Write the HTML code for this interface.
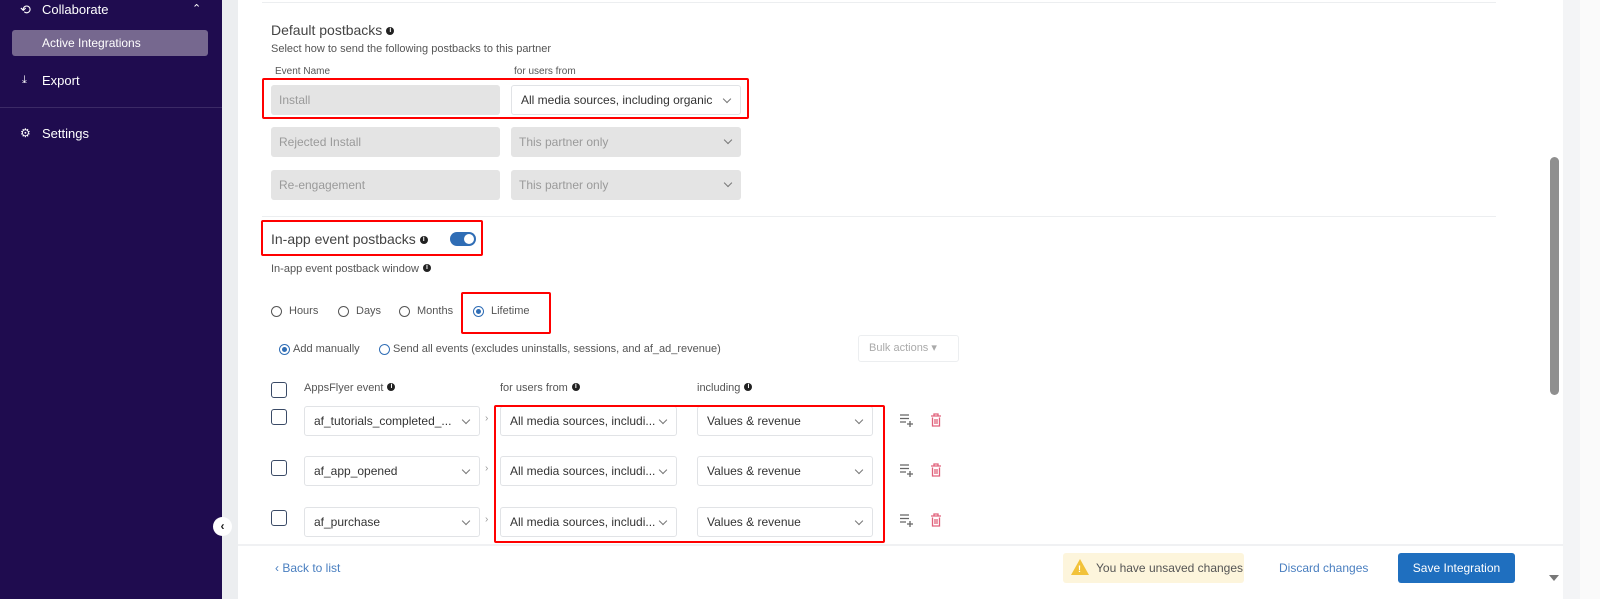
<!DOCTYPE html>
<html><head><meta charset="utf-8"><style>
*{box-sizing:border-box;margin:0;padding:0}
body{width:1600px;height:599px;overflow:hidden;font-family:"Liberation Sans",sans-serif;background:#fff;position:relative;color:#333}
.a{position:absolute}
.sb{left:0;top:0;width:222px;height:599px;background:#1f0c4f}
.sbt{color:#fff;font-size:13px}
.gap{left:222px;top:0;width:16px;height:599px;background:#eceef0}
.in{background:#e4e4e4;border-radius:3px;color:#9a9a9a;font-size:12px;padding-left:8px;line-height:30px;height:30px}
.sel{border:1px solid #e1e3e6;border-radius:3px;background:#fff;font-size:12px;color:#333;padding-left:9px;line-height:28px;height:30px}
.chev{position:absolute;right:10px;top:10px;width:6px;height:6px;border-right:1px solid #777;border-bottom:1px solid #777;transform:rotate(45deg)}
.red{border:2px solid #f00;border-radius:2px}
.cb{width:16px;height:16px;border:1.5px solid #3a4a66;border-radius:3px;background:#fff}
.rad{width:11px;height:11px;border:1px solid #555;border-radius:50%}
.lbl{font-size:11px;color:#555}
.info{display:inline-block;width:8px;height:8px;border-radius:50%;background:#222;color:#fff;font-size:7px;line-height:8px;text-align:center;font-weight:bold;vertical-align:3px;margin-left:4px}
.hr{height:1px;background:#eceef0}
</style></head><body>
<div class="a sb"></div>
<div class="a sbt" style="left:20px;top:2px">⟲</div>
<div class="a sbt" style="left:42px;top:2px">Collaborate</div>
<div class="a sbt" style="left:192px;top:2px;font-size:11px">⌃</div>
<div class="a" style="left:12px;top:30px;width:196px;height:26px;background:#76688f;border-radius:3px"></div>
<div class="a sbt" style="left:42px;top:36px;font-size:12px">Active Integrations</div>
<div class="a sbt" style="left:22px;top:74px;font-size:11px">⤓</div>
<div class="a sbt" style="left:42px;top:73px">Export</div>
<div class="a" style="left:0;top:107px;width:222px;height:1px;background:#3b2a66"></div>
<div class="a sbt" style="left:20px;top:126px;font-size:12px">⚙</div>
<div class="a sbt" style="left:42px;top:126px">Settings</div>
<div class="a gap"></div>
<div class="a" style="left:213px;top:517px;width:19px;height:19px;border-radius:50%;background:#fff;font-size:12px;text-align:center;line-height:19px;font-weight:bold;color:#222">‹</div>
<div class="a" style="left:1563px;top:0;width:17px;height:599px;background:#f3f4f6"></div>
<div class="a" style="left:1580px;top:0;width:20px;height:599px;background:#fafafa"></div>
<div class="a" style="left:1550px;top:157px;width:9px;height:238px;background:#8f8f8f;border-radius:5px"></div>
<div class="a" style="left:1549px;top:575px;width:0;height:0;border-left:5px solid transparent;border-right:5px solid transparent;border-top:6px solid #777"></div>

<div class="a hr" style="left:262px;top:2px;width:1234px"></div>
<div class="a" style="left:271px;top:22px;font-size:14px;color:#444">Default postbacks<span class="info">i</span></div>
<div class="a lbl" style="left:271px;top:43px">Select how to send the following postbacks to this partner</div>
<div class="a lbl" style="left:275px;top:66px;font-size:10px">Event Name</div>
<div class="a lbl" style="left:514px;top:66px;font-size:10px">for users from</div>
<div class="a in" style="left:271px;top:85px;width:229px">Install</div>
<div class="a sel" style="left:511px;top:85px;width:230px">All media sources, including organic<span class="chev"></span></div>
<div class="a red" style="left:262px;top:78px;width:487px;height:41px"></div>
<div class="a in" style="left:271px;top:127px;width:229px">Rejected Install</div>
<div class="a in" style="left:511px;top:127px;width:230px">This partner only<span class="chev"></span></div>
<div class="a in" style="left:271px;top:170px;width:229px">Re-engagement</div>
<div class="a in" style="left:511px;top:170px;width:230px">This partner only<span class="chev"></span></div>
<div class="a hr" style="left:262px;top:216px;width:1234px"></div>

<div class="a red" style="left:261px;top:220px;width:222px;height:36px"></div>
<div class="a" style="left:271px;top:231px;font-size:14px;color:#444">In-app event postbacks<span class="info">i</span></div>
<div class="a" style="left:450px;top:232px;width:26px;height:14px;border-radius:7px;background:#2f6db5"></div>
<div class="a" style="left:464px;top:234px;width:10px;height:10px;border-radius:50%;background:#fff"></div>
<div class="a lbl" style="left:271px;top:263px">In-app event postback window<span class="info">i</span></div>
<div class="a rad" style="left:271px;top:306px"></div><div class="a lbl" style="left:289px;top:305px">Hours</div>
<div class="a rad" style="left:338px;top:306px"></div><div class="a lbl" style="left:356px;top:305px">Days</div>
<div class="a rad" style="left:399px;top:306px"></div><div class="a lbl" style="left:417px;top:305px">Months</div>
<div class="a red" style="left:461px;top:292px;width:90px;height:42px"></div>
<div class="a rad" style="left:473px;top:306px;border-color:#2f6db5"></div><div class="a" style="left:476px;top:309px;width:5px;height:5px;border-radius:50%;background:#2f6db5"></div>
<div class="a lbl" style="left:491px;top:305px">Lifetime</div>

<div class="a rad" style="left:279px;top:344px;border:1.5px solid #2f6db5"></div><div class="a" style="left:282px;top:347px;width:5px;height:5px;border-radius:50%;background:#2f6db5"></div>
<div class="a lbl" style="left:293px;top:343px">Add manually</div>
<div class="a rad" style="left:379px;top:344px;border:1.5px solid #2f6db5"></div>
<div class="a lbl" style="left:393px;top:343px">Send all events (excludes uninstalls, sessions, and af_ad_revenue)</div>
<div class="a" style="left:858px;top:335px;width:101px;height:27px;border:1px solid #eceef0;border-radius:3px;font-size:11px;color:#aaa;line-height:25px;padding-left:10px">Bulk actions ▾</div>

<div class="a cb" style="left:271px;top:382px"></div>
<div class="a lbl" style="left:304px;top:382px">AppsFlyer event<span class="info">i</span></div>
<div class="a lbl" style="left:500px;top:382px">for users from<span class="info">i</span></div>
<div class="a lbl" style="left:697px;top:382px">including<span class="info">i</span></div>

<div class="a cb" style="left:271px;top:409px"></div>
<div class="a sel" style="left:304px;top:406px;width:176px">af_tutorials_completed_...<span class="chev"></span></div>
<div class="a sel" style="left:500px;top:406px;width:177px">All media sources, includi...<span class="chev"></span></div>
<div class="a sel" style="left:697px;top:406px;width:176px">Values &amp; revenue<span class="chev"></span></div>
<div class="a cb" style="left:271px;top:460px"></div>
<div class="a sel" style="left:304px;top:456px;width:176px">af_app_opened<span class="chev"></span></div>
<div class="a sel" style="left:500px;top:456px;width:177px">All media sources, includi...<span class="chev"></span></div>
<div class="a sel" style="left:697px;top:456px;width:176px">Values &amp; revenue<span class="chev"></span></div>
<div class="a cb" style="left:271px;top:510px"></div>
<div class="a sel" style="left:304px;top:507px;width:176px">af_purchase<span class="chev"></span></div>
<div class="a sel" style="left:500px;top:507px;width:177px">All media sources, includi...<span class="chev"></span></div>
<div class="a sel" style="left:697px;top:507px;width:176px">Values &amp; revenue<span class="chev"></span></div>
<div class="a" style="left:485px;top:413px;font-size:10px;color:#999">›</div>
<div class="a" style="left:485px;top:463px;font-size:10px;color:#999">›</div>
<div class="a" style="left:485px;top:514px;font-size:10px;color:#999">›</div>
<div class="a red" style="left:494px;top:405px;width:391px;height:138px"></div>

<svg class="a" style="left:899px;top:413px" width="16" height="14" viewBox="0 0 16 14"><path d="M1 2h9M1 5.5h9M1 9h6M11 8v6M8 11h6" stroke="#666" stroke-width="1.3" fill="none"/></svg>
<svg class="a" style="left:899px;top:463px" width="16" height="14" viewBox="0 0 16 14"><path d="M1 2h9M1 5.5h9M1 9h6M11 8v6M8 11h6" stroke="#666" stroke-width="1.3" fill="none"/></svg>
<svg class="a" style="left:899px;top:513px" width="16" height="14" viewBox="0 0 16 14"><path d="M1 2h9M1 5.5h9M1 9h6M11 8v6M8 11h6" stroke="#666" stroke-width="1.3" fill="none"/></svg>
<svg class="a" style="left:930px;top:413px" width="12" height="14" viewBox="0 0 12 14"><path d="M1 3h10M4 3V1h4v2M2.5 4.5v8.5h7V4.5M5 6v5M7 6v5" stroke="#e0607a" stroke-width="1.3" fill="none"/></svg>
<svg class="a" style="left:930px;top:463px" width="12" height="14" viewBox="0 0 12 14"><path d="M1 3h10M4 3V1h4v2M2.5 4.5v8.5h7V4.5M5 6v5M7 6v5" stroke="#e0607a" stroke-width="1.3" fill="none"/></svg>
<svg class="a" style="left:930px;top:513px" width="12" height="14" viewBox="0 0 12 14"><path d="M1 3h10M4 3V1h4v2M2.5 4.5v8.5h7V4.5M5 6v5M7 6v5" stroke="#e0607a" stroke-width="1.3" fill="none"/></svg>

<div class="a" style="left:238px;top:544px;width:1325px;height:2px;background:#f0f1f3"></div>
<div class="a" style="left:275px;top:561px;font-size:12px;color:#4a7fc0">‹ Back to list</div>
<div class="a" style="left:1063px;top:553px;width:181px;height:30px;background:#fdf5dc;border-radius:3px"></div>
<div class="a" style="left:1071px;top:559px;width:0;height:0;border-left:9px solid transparent;border-right:9px solid transparent;border-bottom:16px solid #f2c23a"></div>
<div class="a" style="left:1078px;top:564px;font-size:9px;font-weight:bold;color:#fff">!</div>
<div class="a" style="left:1096px;top:561px;font-size:12px;color:#555">You have unsaved changes</div>
<div class="a" style="left:1279px;top:561px;font-size:12px;color:#4a7fc0">Discard changes</div>
<div class="a" style="left:1398px;top:553px;width:117px;height:30px;background:#1f6fbf;border-radius:3px;color:#fff;font-size:12px;text-align:center;line-height:30px">Save Integration</div>
</body></html>
